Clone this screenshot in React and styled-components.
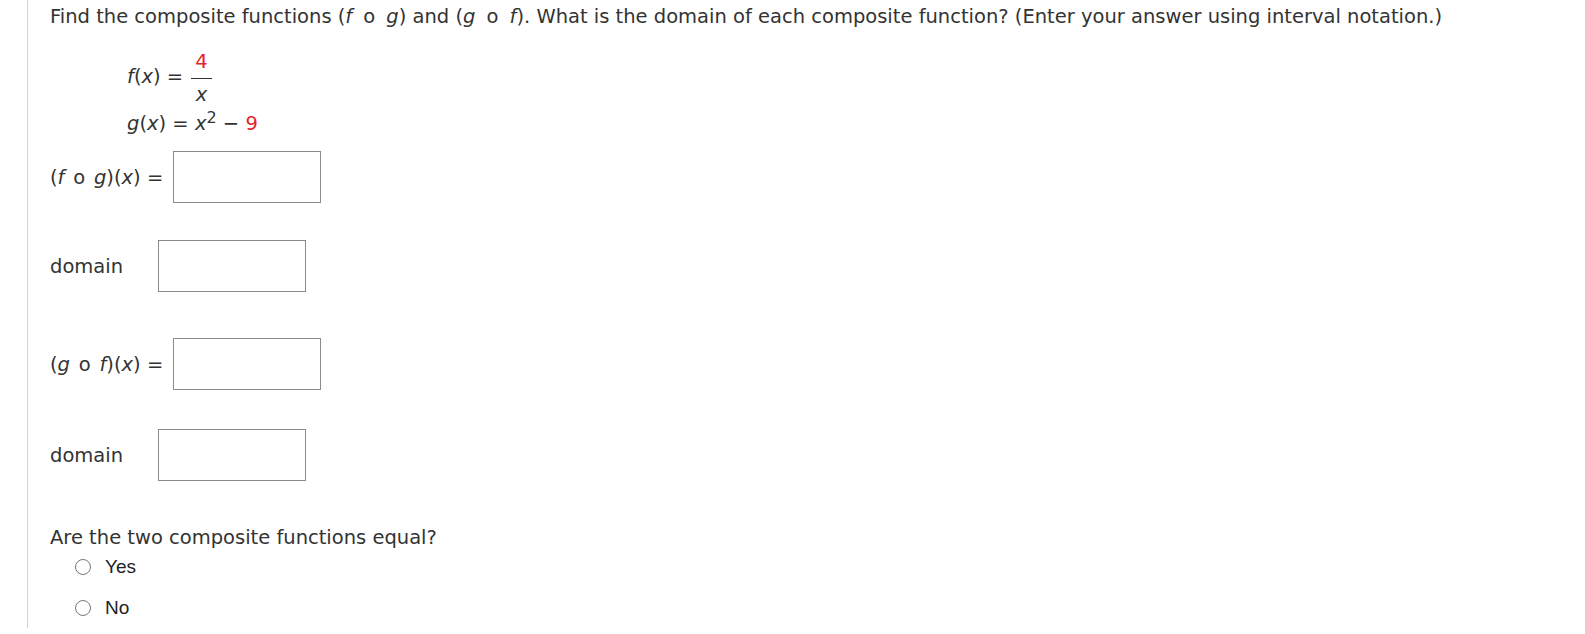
import React from "react";
import styled, { createGlobalStyle } from "styled-components";

const Global = createGlobalStyle`
  html, body { margin: 0; padding: 0; background: #fff; }
  body { font-family: "DejaVu Sans", Verdana, sans-serif; color: #333; }
`;

const Page = styled.div`
  margin-left: 27px;
  border-left: 1px solid #d4d4d4;
  padding: 5px 0 0 22px;
  min-height: 628px;
  box-sizing: border-box;
`;

const Question = styled.p`
  margin: 0;
  font-size: 19.5px;
  line-height: 24px;
`;

const Var = styled.i`
  font-style: italic;
`;

const Red = styled.span`
  color: #e4232b;
`;

const Circ = styled.span`
  display: inline-block;
  margin: 0 ${(p) => (p.wide ? 0.45 : 0.25)}em;
`;

const Given = styled.div`
  margin: 22px 0 0 77px;
  font-size: 19.5px;
  display: flex;
  flex-direction: column;
  gap: 6px;
`;

const Eq = styled.div`
  display: flex;
  align-items: center;
  gap: 8px;
  line-height: 24px;
`;

const Lhs = styled.span`
  padding-bottom: ${(p) => p.lift || 0}px;
`;

const Frac = styled.span`
  display: inline-flex;
  flex-direction: column;
  align-items: center;
  line-height: 22px;
  & > span:first-child {
    border-bottom: 1px solid #333;
    padding: 0 4px 5px;
  }
  & > i {
    padding-top: 5px;
  }
`;

const Sup = styled.sup`
  font-size: 16px;
  line-height: 0;
`;

const Row = styled.div`
  display: flex;
  align-items: center;
  gap: ${(p) => p.gap}px;
  margin-top: ${(p) => p.top}px;
  font-size: 19.5px;
`;

const Box = styled.input`
  width: 148px;
  height: 52px;
  box-sizing: border-box;
  border: 1px solid #8a8a8a;
  margin: 0;
  padding: 0 6px;
  font-size: 18px;
  background: #fff;
`;

const Ask = styled.p`
  margin: 45px 0 0;
  font-size: 19.5px;
  line-height: 24px;
`;

const Options = styled.div`
  margin: 2px 0 0 25px;
  display: flex;
  flex-direction: column;
  gap: 11px;
`;

const Option = styled.label`
  display: flex;
  align-items: center;
  gap: 14px;
  height: 30px;
  font-family: "Liberation Sans", Arial, sans-serif;
  font-size: 19px;
  color: #222;
`;

const Radio = styled.span`
  width: 16px;
  height: 16px;
  border: 1px solid #777;
  border-radius: 50%;
  box-sizing: border-box;
  background: #fff;
`;

function Compose({ a, b }) {
  return (
    <span>
      (<Var>{a}</Var>
      <Circ wide>o</Circ>
      <Var>{b}</Var>)(<Var>x</Var>) =
    </span>
  );
}

export default function App() {
  return (
    <>
      <Global />
      <Page>
        <Question>
          Find the composite functions (<Var>f</Var> <Circ>o</Circ> <Var>g</Var>) and (
          <Var>g</Var> <Circ>o</Circ> <Var>f</Var>). What is the domain of each composite
          function? (Enter your answer using interval notation.)
        </Question>
        <Given>
          <Eq>
            <Lhs lift={4}>
              <Var>f</Var>(<Var>x</Var>) =
            </Lhs>
            <Frac>
              <Red>4</Red>
              <Var>x</Var>
            </Frac>
          </Eq>
          <Eq>
            <Lhs>
              <Var>g</Var>(<Var>x</Var>) = <Var>x</Var>
              <Sup>2</Sup> − <Red>9</Red>
            </Lhs>
          </Eq>
        </Given>
        <Row top={15} gap={10}>
          <Compose a="f" b="g" />
          <Box />
        </Row>
        <Row top={37} gap={35}>
          <span>domain</span>
          <Box />
        </Row>
        <Row top={46} gap={10}>
          <Compose a="g" b="f" />
          <Box />
        </Row>
        <Row top={39} gap={35}>
          <span>domain</span>
          <Box />
        </Row>
        <Ask>Are the two composite functions equal?</Ask>
        <Options>
          <Option>
            <Radio />
            Yes
          </Option>
          <Option>
            <Radio />
            No
          </Option>
        </Options>
      </Page>
    </>
  );
}
